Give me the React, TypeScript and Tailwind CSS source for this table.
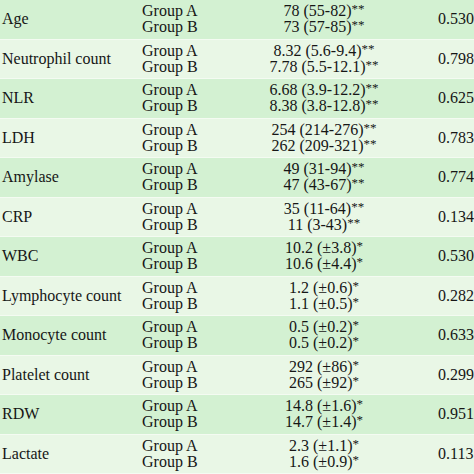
import { clsx } from 'clsx'

type Row = {
  label: string
  a: string
  b: string
  stars: string
  p: string
}

const rows: Row[] = [
  { label: 'Age', a: '78 (55-82)', b: '73 (57-85)', stars: '**', p: '0.5300' },
  { label: 'Neutrophil count', a: '8.32 (5.6-9.4)', b: '7.78 (5.5-12.1)', stars: '**', p: '0.7985' },
  { label: 'NLR', a: '6.68 (3.9-12.2)', b: '8.38 (3.8-12.8)', stars: '**', p: '0.6257' },
  { label: 'LDH', a: '254 (214-276)', b: '262 (209-321)', stars: '**', p: '0.7831' },
  { label: 'Amylase', a: '49 (31-94)', b: '47 (43-67)', stars: '**', p: '0.7744' },
  { label: 'CRP', a: '35 (11-64)', b: '11 (3-43)', stars: '**', p: '0.1344' },
  { label: 'WBC', a: '10.2 (±3.8)', b: '10.6 (±4.4)', stars: '*', p: '0.5300' },
  { label: 'Lymphocyte count', a: '1.2 (±0.6)', b: '1.1 (±0.5)', stars: '*', p: '0.2825' },
  { label: 'Monocyte count', a: '0.5 (±0.2)', b: '0.5 (±0.2)', stars: '*', p: '0.6334' },
  { label: 'Platelet count', a: '292 (±86)', b: '265 (±92)', stars: '*', p: '0.2990' },
  { label: 'RDW', a: '14.8 (±1.6)', b: '14.7 (±1.4)', stars: '*', p: '0.9511' },
  { label: 'Lactate', a: '2.3 (±1.1)', b: '1.6 (±0.9)', stars: '*', p: '0.1131' },
]

function Value({ text, stars }: { text: string; stars: string }) {
  return (
    <div className="whitespace-nowrap">
      {text}
      <span className="relative top-[-3px] text-[13px] leading-none">{stars}</span>
    </div>
  )
}

function TableRow({ row, dark }: { row: Row; dark: boolean }) {
  return (
    <div
      className={clsx(
        'grid grid-cols-[140px_125px_118px_1fr] items-center h-[39.5px] border-b border-[#f4fbf2]',
        dark ? 'bg-[#d3f1d2]' : 'bg-[#e9f7e6]'
      )}
    >
      <div className="pl-[2px] whitespace-nowrap">{row.label}</div>
      <div className="pl-[2px] leading-[16px]">
        <div>Group A</div>
        <div>Group B</div>
      </div>
      <div className="flex flex-col items-center leading-[16px]">
        <Value text={row.a} stars={row.stars} />
        <Value text={row.b} stars={row.stars} />
      </div>
      <div className="pl-[55px] whitespace-nowrap">{row.p}</div>
    </div>
  )
}

export default function App() {
  return (
    <div className="w-[474px] h-[474px] overflow-hidden bg-[#e9f7e6] text-[16px] text-[#161616] font-['Liberation_Serif',serif]">
      {rows.map((row, i) => (
        <TableRow key={row.label} row={row} dark={i % 2 === 0} />
      ))}
    </div>
  )
}
